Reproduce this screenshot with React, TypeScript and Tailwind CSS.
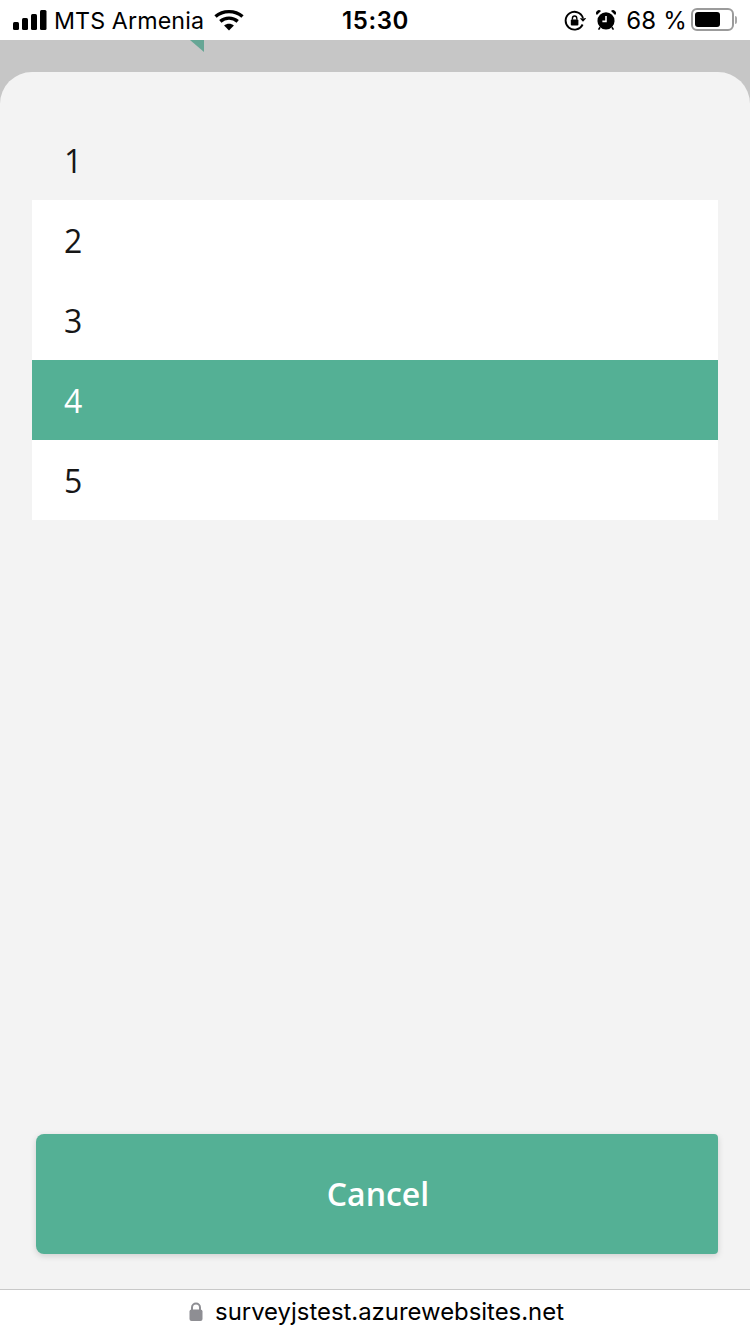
export default function App() {
  const items = [
    { n: "1", cls: "text-[#161616]" },
    { n: "2", cls: "bg-white text-[#161616]" },
    { n: "3", cls: "bg-white text-[#161616]" },
    { n: "4", cls: "bg-[#54b095] text-white" },
    { n: "5", cls: "bg-white text-[#161616]" },
  ];
  return (
    <div className="relative flex h-[1334px] w-[750px] flex-col overflow-hidden bg-white">
      <div className="grid h-10 shrink-0 grid-cols-[1fr_auto_1fr] items-center bg-white pt-[2px] font-['Inter','Liberation_Sans',sans-serif] text-[24px] leading-none text-black">
        <div className="flex items-center pl-[13px]">
          <svg width="34" height="20" viewBox="0 0 34 20" className="mb-[3px] mr-[7px]" fill="#000">
            <rect x="0" y="12" width="6" height="8" rx="1.5" />
            <rect x="9" y="8" width="6" height="12" rx="1.5" />
            <rect x="18" y="4" width="6" height="16" rx="1.5" />
            <rect x="27" y="0" width="6.5" height="20" rx="1.5" />
          </svg>
          <span className="text-[23.25px] tracking-[0.1px]">MTS Armenia</span>
          <svg width="30" height="22" viewBox="0 0 30 22" className="mb-[3px] ml-[10px]" fill="none" stroke="#000" strokeWidth="3.4">
            <path d="M1.5 7.6C9 .9 21 .9 28.5 7.6" />
            <path d="M6.3 12.4c5-4.4 12.4-4.4 17.4 0" />
            <path d="M15 21.5l-4.9-5c2.8-2.3 7-2.3 9.8 0z" fill="#000" stroke="none" />
          </svg>
        </div>
        <div className="w-[66px] text-center text-[24px] font-semibold tracking-[0.6px]">15:30</div>
        <div className="flex items-center justify-end pr-[13px]">
          <svg width="22" height="22" viewBox="0 0 22 22" className="mr-[10px]" fill="none">
            <path d="M18.6 14.5A8.9 8.9 0 1 1 19 8" stroke="#000" strokeWidth="1.9" />
            <path d="M15.8 8.2h6.4l-3.2 3.6z" fill="#000" />
            <rect x="6.8" y="9.6" width="7.6" height="6" rx="1" fill="#000" />
            <path d="M8.4 9.8V8.2a2.2 2.2 0 0 1 4.4 0v1.6" stroke="#000" strokeWidth="1.4" />
          </svg>
          <svg width="20" height="22" viewBox="0 0 22 24" className="mb-[2px] mr-[10px]" fill="none">
            <circle cx="11" cy="13" r="9.4" fill="#000" />
            <path d="M11 7.5V13.5H7" stroke="#fff" strokeWidth="1.7" />
            <path d="M1 6.5 5.5 2.2A3 3 0 0 0 1 6.5zM21 6.5 16.5 2.2A3 3 0 0 1 21 6.5z" fill="#000" />
            <path d="M4.5 20 2.8 22.6M17.5 20l1.7 2.6" stroke="#000" strokeWidth="1.8" />
          </svg>
          <span className="mr-[4px] text-[24px] tracking-[0.2px]">68 %</span>
          <div className="mb-[3px] flex items-center">
            <div className="flex h-[23px] w-[43px] items-center rounded-[6px] border-2 border-[#9b9b9b] p-[2px]">
              <div className="h-full w-[25px] rounded-[3px] bg-black" />
            </div>
            <div className="ml-[1px] h-[8px] w-[2px] rounded-r-[2px] bg-[#a8a8a8]" />
          </div>
        </div>
      </div>

      <div className="relative flex min-h-0 flex-1 flex-col bg-[#c6c6c6] pt-8">
        <svg width="14" height="12" viewBox="0 0 14 12" className="absolute left-[190px] top-0">
          <path d="M0 0H14V12Z" fill="#66a695" />
        </svg>
        <div className="flex min-h-0 flex-1 flex-col rounded-t-[32px] bg-[#f3f3f3] pl-8 pr-8 pt-12 font-['Open_Sans','Liberation_Sans',sans-serif]">
          <ul className="flex flex-col">
            {items.map((it) => (
              <li key={it.n} className={`flex h-20 items-center pl-8 pt-[1px] text-[32px] leading-none ${it.cls}`}>
                {it.n}
              </li>
            ))}
          </ul>
          <div className="mt-auto pb-[35px] pl-1">
            <button className="flex h-[120px] w-full items-center justify-center rounded-[8px] rounded-r-[4px] bg-[#54b095] pl-[2px] text-[32px] font-semibold text-white shadow-[0_2px_6px_rgba(0,0,0,0.15)]">
              Cancel
            </button>
          </div>
        </div>
      </div>

      <div className="flex h-[45px] shrink-0 items-center justify-center border-t border-[#c8c8c8] bg-white pb-[1px] pl-[3px] font-['Inter','Liberation_Sans',sans-serif] text-[23.9px] leading-none text-black">
        <svg width="14" height="20" viewBox="0 0 14 20" className="mr-[12px]">
          <rect x="0.5" y="7.5" width="13" height="11.5" rx="2" fill="#8e8e93" />
          <path d="M3 8V5.5a4 4 0 0 1 8 0V8" fill="none" stroke="#8e8e93" strokeWidth="2" />
        </svg>
        <span>surveyjstest.azurewebsites.net</span>
      </div>
    </div>
  );
}
